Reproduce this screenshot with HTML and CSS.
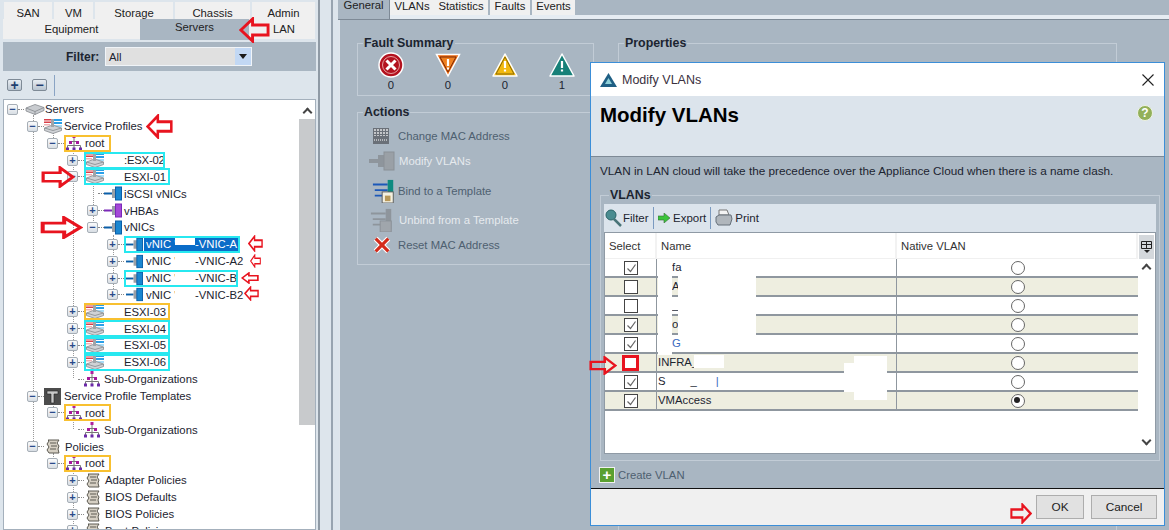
FILE: index.html
```html
<!DOCTYPE html>
<html lang="en">
<head>
<meta charset="utf-8">
<title>Modify VLANs</title>
<link rel="stylesheet" href="styles.css">
</head>
<body>
<svg class="defs" width="0" height="0">
  <symbol id="server" viewBox="0 0 20 13">
    <path d="M1 5l9-3.500 9 3v3l-9 4-9-3.500z" fill="#c9ccd0" stroke="#85898e" stroke-width=".8"/>
    <path d="M1 5l9 3.500 9-4M10 8.500v3.500" fill="none" stroke="#85898e" stroke-width=".8"/>
  </symbol>
  <symbol id="profile" viewBox="0 0 18 15">
    <rect x="0" y="0" width="7" height="1.500" fill="#d8404a"/><rect x="0" y="2.500" width="7" height="1.500" fill="#d8404a"/><rect x="0" y="5" width="6" height="1.500" fill="#eeb0b4"/>
    <rect x="10" y="0" width="8" height="2" fill="#2aa0e8"/><rect x="10" y="3" width="8" height="2" fill="#2aa0e8"/><rect x="10" y="6" width="8" height="2" fill="#a8dcf8"/>
    <path d="M.5 9l8-3 9 3v2.500l-8.500 3-8.500-3z" fill="#cfd2d6" stroke="#85898e" stroke-width=".8"/>
    <path d="M.5 9l8.500 2.500 8.500-2.500" fill="none" stroke="#85898e" stroke-width=".8"/>
    <rect x="7" y="0" width="3" height="8" fill="#a0a4a8"/>
  </symbol>
  <symbol id="org" viewBox="0 0 16 16">
    <path d="M8 2v11M4 8V6.500h8V8M1.500 13v-2.500h13V13" fill="none" stroke="#777" stroke-width="1"/>
    <rect x="6.500" y="0" width="3" height="3" fill="#b0209c"/><rect x="3" y="6" width="3" height="3" fill="#a6189c"/><rect x="10" y="6" width="3" height="3" fill="#a6189c"/>
    <rect x="0" y="12.500" width="3" height="3" fill="#6c2aa8"/><rect x="6.500" y="12.500" width="3" height="3" fill="#6c2aa8"/><rect x="13" y="12.500" width="3" height="3" fill="#6c2aa8"/>
  </symbol>
  <symbol id="vnic" viewBox="0 0 18 15">
    <rect x="0" y="6.500" width="8" height="2" fill="#0a5ea8"/>
    <rect x="8" y="3" width="4" height="9" fill="#9aa0a6"/>
    <rect x="11.500" y="1" width="6" height="13" fill="#1a86d0" stroke="#0a5ea8"/>
  </symbol>
  <symbol id="vhba" viewBox="0 0 18 15">
    <rect x="0" y="6.500" width="8" height="2" fill="#7a28b8"/>
    <rect x="8" y="3" width="4" height="9" fill="#9aa0a6"/>
    <rect x="11.500" y="1" width="6" height="13" fill="#a448d8" stroke="#7a28b8"/>
  </symbol>
  <symbol id="scroll" viewBox="0 0 15 15">
    <path d="M2 1h11l-2 3 2 3-1 3 1 4H3l-2-3 2-3-2-3 2-3z" fill="#d6d0c4" stroke="#5c5a52"/>
    <path d="M4 4h6M5 7h6M4 10h6" stroke="#5c5a52"/>
  </symbol>
  <symbol id="template" viewBox="0 0 17 17">
    <rect width="17" height="17" fill="#4c4c4c"/>
    <path d="M3 3h11v3h-4v9H7V6H3z" fill="#c8c8c8" stroke="#222" stroke-width=".6"/>
  </symbol>
  <symbol id="arrowL" viewBox="0 0 32 26" preserveAspectRatio="none">
    <path d="M2 13L14 2v6h16v10H14v6z" fill="none" stroke="#e8141f" stroke-width="3"/>
  </symbol>
  <symbol id="arrowR" viewBox="0 0 32 26" preserveAspectRatio="none">
    <path d="M30 13L18 2v6H2v10h16v6z" fill="none" stroke="#e8141f" stroke-width="3"/>
  </symbol>
  <symbol id="check" viewBox="0 0 13 13">
    <path d="M2.500 6.500l3 3 5-7" fill="none" stroke="#666" stroke-width="1.200"/>
  </symbol>
</svg>

<div class="screen">
  <aside class="nav">
    <div class="tabs-back">
      <span class="tb t-san">SAN</span><span class="tb t-vm">VM</span><span class="tb t-storage">Storage</span><span class="tb t-chassis">Chassis</span><span class="tb t-admin">Admin</span>
    </div>
    <div class="tabs-front">
      <span class="tf t-equip">Equipment</span><span class="tf t-servers">Servers</span><span class="tf t-lan"><span class="lan">LAN</span></span>
    </div>
    <div class="filter">
      <b class="filter-label">Filter:</b>
      <div class="select"><span class="select-val">All</span><span class="select-btn"><i class="caret"></i></span></div>
    </div>
    <div class="treetools">
      <span class="tool-btn">+</span><span class="tool-btn">&minus;</span><span class="tool-sep"></span>
    </div>
    <div class="tree">
      <div class="rows">
        <span class="vline v33"></span>
        <span class="vline v53a"></span><span class="vline v53b"></span><span class="vline v53c"></span>
        <span class="vline v73a"></span><span class="vline v73b"></span><span class="vline v73c"></span>
        <span class="vline v93"></span><span class="vline v113"></span>
        <div class="row l0"><span class="tg">&minus;</span><span class="dots"></span><svg class="ic ic20"><use href="#server"/></svg><span class="tx">Servers</span></div>
        <div class="row l1"><span class="tg">&minus;</span><span class="dots"></span><svg class="ic"><use href="#profile"/></svg><span class="tx">Service Profiles</span></div>
        <div class="row l2"><span class="tg">&minus;</span><span class="dots"></span><span class="lb box-y w-root"><svg class="ic ic-o"><use href="#org"/></svg><span class="tx">root</span></span></div>
        <div class="row l3"><span class="tg">+</span><span class="dots"></span><span class="lb box-c w-esx"><svg class="ic"><use href="#profile"/></svg><span class="tx gap-s tight">:ESX-02</span></span></div>
        <div class="row l3"><span class="tg">&minus;</span><span class="dots"></span><span class="lb box-c w-esxi"><svg class="ic"><use href="#profile"/></svg><span class="tx gap-s">ESXI-01</span></span></div>
        <div class="row l4"><span class="tg none"></span><span class="dots"></span><svg class="ic"><use href="#vnic"/></svg><span class="tx">iSCSI vNICs</span></div>
        <div class="row l4"><span class="tg">+</span><span class="dots"></span><svg class="ic"><use href="#vhba"/></svg><span class="tx">vHBAs</span></div>
        <div class="row l4"><span class="tg">&minus;</span><span class="dots"></span><svg class="ic"><use href="#vnic"/></svg><span class="tx">vNICs</span></div>
        <div class="row l5"><span class="tg">+</span><span class="dots"></span><span class="lb box-c w-va"><svg class="ic ic-v"><use href="#vnic"/></svg><span class="sel"><span class="vn">vNIC '</span><span class="mask half"></span><span>-VNIC-A</span></span></span></div>
        <div class="row l5"><span class="tg">+</span><span class="dots"></span><span class="lb"><svg class="ic ic-v"><use href="#vnic"/></svg><span class="vn vn-p">vNIC '</span><span class="mask"></span><span>-VNIC-A2</span></span></div>
        <div class="row l5"><span class="tg">+</span><span class="dots"></span><span class="lb box-c w-vb"><svg class="ic ic-v"><use href="#vnic"/></svg><span class="vn vn-p">vNIC '</span><span class="mask"></span><span>-VNIC-B</span></span></div>
        <div class="row l5"><span class="tg">+</span><span class="dots"></span><span class="lb"><svg class="ic ic-v"><use href="#vnic"/></svg><span class="vn vn-p">vNIC '</span><span class="mask"></span><span>-VNIC-B2</span></span></div>
        <div class="row l3"><span class="tg">+</span><span class="dots"></span><span class="lb box-y w-esxi"><svg class="ic"><use href="#profile"/></svg><span class="tx gap-s">ESXI-03</span></span></div>
        <div class="row l3"><span class="tg">+</span><span class="dots"></span><span class="lb box-c w-esxi"><svg class="ic"><use href="#profile"/></svg><span class="tx gap-s">ESXI-04</span></span></div>
        <div class="row l3"><span class="tg">+</span><span class="dots"></span><span class="lb box-c w-esxi"><svg class="ic"><use href="#profile"/></svg><span class="tx gap-s">ESXI-05</span></span></div>
        <div class="row l3"><span class="tg">+</span><span class="dots"></span><span class="lb box-c w-esxi"><svg class="ic"><use href="#profile"/></svg><span class="tx gap-s">ESXI-06</span></span></div>
        <div class="row l3"><span class="tg none"></span><span class="dots"></span><svg class="ic ic-o"><use href="#org"/></svg><span class="tx">Sub-Organizations</span></div>
        <div class="row l1"><span class="tg">&minus;</span><span class="dots"></span><svg class="ic ic-t"><use href="#template"/></svg><span class="tx">Service Profile Templates</span></div>
        <div class="row l2"><span class="tg">&minus;</span><span class="dots"></span><span class="lb box-y w-root"><svg class="ic ic-o"><use href="#org"/></svg><span class="tx">root</span></span></div>
        <div class="row l3"><span class="tg none"></span><span class="dots"></span><svg class="ic ic-o"><use href="#org"/></svg><span class="tx">Sub-Organizations</span></div>
        <div class="row l1"><span class="tg">&minus;</span><span class="dots"></span><svg class="ic ic-s"><use href="#scroll"/></svg><span class="tx">Policies</span></div>
        <div class="row l2"><span class="tg">&minus;</span><span class="dots"></span><span class="lb box-y w-root"><svg class="ic ic-o"><use href="#org"/></svg><span class="tx">root</span></span></div>
        <div class="row l3"><span class="tg">+</span><span class="dots"></span><svg class="ic ic-s"><use href="#scroll"/></svg><span class="tx">Adapter Policies</span></div>
        <div class="row l3"><span class="tg">+</span><span class="dots"></span><svg class="ic ic-s"><use href="#scroll"/></svg><span class="tx">BIOS Defaults</span></div>
        <div class="row l3"><span class="tg">+</span><span class="dots"></span><svg class="ic ic-s"><use href="#scroll"/></svg><span class="tx">BIOS Policies</span></div>
        <div class="row l3"><span class="tg">+</span><span class="dots"></span><svg class="ic ic-s"><use href="#scroll"/></svg><span class="tx">Boot Policies</span></div>
      </div>
      <div class="vscroll"><span class="chev up"></span><span class="thumb"></span></div>
    </div>
  </aside>

  <main class="work">
    <div class="tabs-main">
      <span class="mt active">General</span><span class="mt m-vlans">VLANs</span><span class="mt m-stats">Statistics</span><span class="mt m-faults">Faults</span><span class="mt m-events">Events</span>
    </div>
    <div class="panel">
      <div class="col-left">
        <fieldset class="group fault">
          <legend>Fault Summary</legend>
          <div class="faults">
            <div class="fitem"><svg width="26" height="26" viewBox="0 0 26 26"><circle cx="13" cy="13" r="12" fill="#b3121f" stroke="#fff" stroke-width="1.500"/><circle cx="13" cy="13" r="8.500" fill="#b3121f" stroke="#e7a0a0"/><path d="M8.500 8.500l9 9M17.500 8.500l-9 9" stroke="#fff" stroke-width="3"/></svg><span>0</span></div>
            <div class="fitem"><svg width="26" height="26" viewBox="0 0 26 26"><path d="M1.500 2.500h23L13 24z" fill="#ec6a10" stroke="#fff" stroke-width="1.500"/><path d="M5 5h16L13 20z" fill="#f08020" stroke="#7c2c08"/><path d="M13 7v7M13 15.500v2" stroke="#fff" stroke-width="2.200"/></svg><span>0</span></div>
            <div class="fitem"><svg width="26" height="26" viewBox="0 0 26 26"><path d="M13 2L25 24H1z" fill="#f2b90f" stroke="#fff" stroke-width="1.500" stroke-linejoin="round"/><path d="M13 5L22 22H4z" fill="#f2b90f" stroke="#8a6a08"/><path d="M13 9v7M13 17.500v2" stroke="#fff" stroke-width="2.200"/></svg><span>0</span></div>
            <div class="fitem"><svg width="26" height="26" viewBox="0 0 26 26"><path d="M13 2L25 24H1z" fill="#178078" stroke="#fff" stroke-width="1.500" stroke-linejoin="round"/><path d="M13 9v7M13 17.500v2" stroke="#fff" stroke-width="2.200"/></svg><span>1</span></div>
          </div>
        </fieldset>
        <fieldset class="group actions">
          <legend>Actions</legend>
          <div class="action act-mac"><svg class="aic" viewBox="0 0 20 18"><rect x="2" y="1" width="16" height="16" fill="#6a7078"/><path d="M4 2v7M7 2v7M10 2v7M13 2v7M16 2v7" stroke="#fff" stroke-width="1.200" stroke-dasharray="2 1"/><path d="M3 13h14" stroke="#fff" stroke-dasharray="1 1"/></svg><span>Change MAC Address</span></div>
          <div class="action off act-mod"><svg class="aic" viewBox="0 0 26 20"><rect x="0" y="8" width="9" height="4" fill="#8e959c"/><rect x="9" y="4" width="6" height="12" fill="#8e959c"/><rect x="15" y="1" width="10" height="18" fill="#9aa0a6" stroke="#8a9096"/></svg><span>Modify VLANs</span></div>
          <div class="action act-bind"><svg class="aic" viewBox="0 0 26 26"><path d="M1 6h16M3 12h14M3 18h12" stroke="#1c58b8" stroke-width="2"/><rect x="17" y="1" width="6" height="22" fill="#0e8a80"/><rect x="11" y="14" width="12" height="12" fill="#f4f0e0" stroke="#5a5a5a"/><rect x="14" y="18" width="6" height="6" fill="#b89858"/></svg><span>Bind to a Template</span></div>
          <div class="action off act-unbind"><svg class="aic" viewBox="0 0 26 26"><path d="M1 6h16M3 12h14M3 18h12" stroke="#8e959c" stroke-width="2"/><rect x="17" y="1" width="6" height="22" fill="#8e959c"/><rect x="11" y="14" width="12" height="12" fill="#a0a6ac" stroke="#8a9096"/></svg><span>Unbind from a Template</span></div>
          <div class="action act-reset"><svg class="aic" viewBox="0 0 20 20"><path d="M3 3l14 14M17 3L3 17" stroke="#fff" stroke-width="6"/><path d="M3 3l14 14M17 3L3 17" stroke="#d42a1a" stroke-width="3.500"/></svg><span>Reset MAC Address</span></div>
        </fieldset>
      </div>
      <fieldset class="group props"><legend>Properties</legend></fieldset>
    </div>
  </main>

  <section class="dialog">
    <header class="dlg-title">
      <svg class="dlg-logo" width="17" height="14" viewBox="0 0 17 14"><path d="M8.500 0L17 14H0z" fill="#1f5f84"/><path d="M8.500 5L12 11H5z" fill="#8fd0d8"/></svg>
      <span class="dlg-title-text">Modify VLANs</span>
      <svg class="dlg-close" width="12" height="12" viewBox="0 0 12 12"><path d="M.5.500l11 11M11.500.500l-11 11" stroke="#222" stroke-width="1.100"/></svg>
    </header>
    <div class="dlg-head">
      <h1>Modify VLANs</h1>
      <span class="help">?</span>
    </div>
    <div class="dlg-body">
      <p class="note">VLAN in LAN cloud will take the precedence over the Appliance Cloud when there is a name clash.</p>
      <fieldset class="group vlans">
        <legend>VLANs</legend>
        <div class="tbl-tools">
          <span class="tt tt-f"><svg width="18" height="18" viewBox="0 0 18 18"><circle cx="7" cy="6" r="5" fill="#4a8c90" stroke="#2a6468"/><path d="M10 10l7 7" stroke="#4a7478" stroke-width="2.500"/></svg>Filter</span>
          <span class="tt-sep"></span>
          <span class="tt tt-e"><svg width="12" height="10" viewBox="0 0 12 10"><path d="M0 3h6V0l6 5-6 5V7H0z" fill="#3ac43a" stroke="#3a6a3a" stroke-width=".6"/></svg>Export</span>
          <span class="tt-sep"></span>
          <span class="tt"><svg width="18" height="18" viewBox="0 0 18 18"><path d="M4 1h8l2 5H4z" fill="#f4f4f4" stroke="#777"/><path d="M1 8l3-2h12l1 4-2 6H3l-2-3z" fill="#b0b6bc" stroke="#66707a"/></svg>Print</span>
        </div>
        <div class="tbl">
          <div class="tbl-main">
            <div class="thead"><span class="c1">Select</span><span class="c2">Name</span><span class="c3">Native VLAN</span></div>
            <div class="tr"><span class="c1"><i class="cb"><svg width="13" height="13"><use href="#check"/></svg></i></span><span class="c2 ind">fa</span><span class="c3"><i class="rb"></i></span></div>
            <div class="tr alt"><span class="c1"><i class="cb"></i></span><span class="c2 ind">A</span><span class="c3"><i class="rb"></i></span></div>
            <div class="tr"><span class="c1"><i class="cb"></i></span><span class="c2 ind">_</span><span class="c3"><i class="rb"></i></span></div>
            <div class="tr alt"><span class="c1"><i class="cb"><svg width="13" height="13"><use href="#check"/></svg></i></span><span class="c2 ind">o</span><span class="c3"><i class="rb"></i></span></div>
            <div class="tr"><span class="c1"><i class="cb"><svg width="13" height="13"><use href="#check"/></svg></i></span><span class="c2 ind link">G</span><span class="c3"><i class="rb"></i></span></div>
            <div class="tr alt"><span class="c1"><i class="cb"></i></span><span class="c2">INFRA_</span><span class="c3"><i class="rb"></i></span></div>
            <div class="tr"><span class="c1"><i class="cb"><svg width="13" height="13"><use href="#check"/></svg></i></span><span class="c2">S<span class="frag">_</span><span class="frag2 link">|</span></span><span class="c3"><i class="rb"></i></span></div>
            <div class="tr alt"><span class="c1"><i class="cb"><svg width="13" height="13"><use href="#check"/></svg></i></span><span class="c2">VMAccess</span><span class="c3"><i class="rb on"></i></span></div>
          </div>
          <div class="tbl-side">
            <span class="col-btn"><svg width="11" height="13" viewBox="0 0 11 13"><path d="M.5.500h10v7H.5zM.5 3.500h10M5.500.500v7" fill="none" stroke="#222"/><path d="M3 9h6l-3 3z" fill="#222"/></svg></span>
            <span class="chev up"></span>
            <span class="chev down"></span>
          </div>
          <span class="patch p1"></span><span class="patch p2"></span><span class="patch p3"></span><span class="patch p4"></span><span class="patch p5"></span>
          <span class="redbox"></span>
        </div>
      </fieldset>
      <div class="create"><span class="plus">+</span><span>Create VLAN</span></div>
    </div>
    <footer class="dlg-foot">
      <button class="btn ok">OK</button>
      <button class="btn cancel">Cancel</button>
    </footer>
  </section>

  <svg class="arrow a1"><use href="#arrowL"/></svg>
  <svg class="arrow a2"><use href="#arrowL"/></svg>
  <svg class="arrow a3"><use href="#arrowR"/></svg>
  <svg class="arrow a4"><use href="#arrowR"/></svg>
  <svg class="arrow a5"><use href="#arrowL"/></svg>
  <svg class="arrow a6"><use href="#arrowL"/></svg>
  <svg class="arrow a7"><use href="#arrowL"/></svg>
  <svg class="arrow a8"><use href="#arrowL"/></svg>
  <svg class="arrow a9"><use href="#arrowR"/></svg>
  <svg class="arrow a10"><use href="#arrowR"/></svg>
</div>
</body>
</html>
```
FILE: styles.css
```css
* { box-sizing: border-box; }
html, body { margin: 0; height: 100%; }
body { overflow: hidden; background: #dde5ec; font: 11.3px "Liberation Sans", Arial, sans-serif; color: #1c2430; }
.defs { position: absolute; }
.screen { position: relative; display: flex; width: 1169px; height: 530px; overflow: hidden; }

/* left navigator */
.nav { width: 320px; flex: none; display: flex; flex-direction: column; padding-left: 3px; background: #dde5ec; border-right: 2px solid #8f9aa5; height: 530px; }
.tabs-back { display: flex; height: 17px; margin-top: 2px; flex: none; gap: 2px; padding-left: 1px; overflow: hidden; margin-bottom: 0; }
.tb { display: block; background: #f0f0f0; text-align: center; height: 17px; padding-top: 3px; line-height: 16px; color: #222; overflow: hidden; }
.t-san { width: 48px; } .t-vm { width: 39px; } .t-storage { width: 78px; } .t-chassis { width: 75px; } .t-admin { width: 63px; }
.tabs-front { display: flex; height: 20px; width: 312px; flex: none; }
.tf { display: block; text-align: center; background: #f0f0f0; line-height: 20px; color: #222; }
.t-equip { width: 137px; }
.t-servers { width: 109px; background: #a9b6c2; line-height: 16px; height: 21px; }
.t-lan { width: 66px; }
.lan { margin-left: 4px; }
.filter { margin-top: 3px; height: 29px; width: 313px; background: #a9b6c2; display: flex; align-items: center; padding-left: 63px; gap: 5px; flex: none; }
.filter-label { font-size: 12px; color: #1c2430; width: 34px; }
.select { width: 147px; height: 19px; background: #e0e0e0; border: 1px solid #f0f4f8; display: flex; align-items: center; padding-left: 3px; }
.select-val { flex: 1; }
.select-btn { width: 16px; height: 17px; background: #c2d8f4; display: flex; align-items: center; justify-content: center; }
.caret { width: 0; height: 0; border: 4px solid transparent; border-top: 5px solid #1a1a1a; border-bottom: 0; }
.treetools { height: 28px; flex: none; display: flex; align-items: center; padding-left: 4px; gap: 10px; width: 313px; }
.tool-btn { width: 15px; height: 12px; background: linear-gradient(#e8edf2, #b8c4d0); border: 1px solid #7e8a96; border-radius: 2px; display: flex; align-items: center; justify-content: center; font-weight: bold; color: #1f3f70; font-size: 14px; line-height: 1; }
.tool-sep { width: 1px; height: 21px; background: #8aa4c4; margin-left: -3px; }
.tree { flex: 1; width: 313px; background: #fff; border: 1px solid #a4b0bc; position: relative; display: flex; min-height: 0; overflow: hidden; }
.rows { flex: 1; position: relative; padding-top: 1px; }
.row { height: 16.870px; display: flex; align-items: center; white-space: nowrap; color: #1c2430; position: relative; }
.l0 { padding-left: 3px; } .l1 { padding-left: 23px; } .l2 { padding-left: 43px; } .l3 { padding-left: 63px; } .l4 { padding-left: 83px; } .l5 { padding-left: 103px; }
.tg { width: 11px; height: 11px; flex: none; border: 1px solid #a6aeb6; border-radius: 2px; background: linear-gradient(#fafbfc, #d8dee4); display: flex; align-items: center; justify-content: center; font-size: 11px; line-height: 1; color: #2a4a8a; font-weight: bold; position: relative; z-index: 1; }
.tg.none { visibility: hidden; width: 5.500px; margin-left: 5.500px; }
.tg.none + .dots { width: 6px; }
.dots { width: 6px; flex: none; border-top: 1px dotted #888; }
.ic { width: 18px; height: 15px; flex: none; margin-right: 2px; }
.ic20 { width: 20px; height: 13px; margin-left: 1px; margin-right: 0; }
.ic-o { width: 16px; height: 16px; margin-right: 3px; }
.row > .ic-o { margin-right: 4px; }
.ic-t { width: 17px; height: 17px; margin-right: 3px; }
.ic-s { width: 15px; height: 15px; margin-left: 2px; margin-right: 4px; }
.ic-v { width: 17px; margin-right: 1px; }
.lb { display: flex; align-items: center; height: 17px; padding-left: 2px; flex: none; }
.box-c { outline: 2px solid #27e8f0; outline-offset: -2px; }
.box-y { outline: 2px solid #f8c030; outline-offset: -2px; }
.w-root { width: 47px; } .w-esx { width: 81px; } .w-esxi { width: 86px; } .w-va { width: 116px; } .w-vb { width: 114px; }
.gap-s { margin-left: 18px; }
.tight { letter-spacing: -.2px; }
.mask { width: 20px; flex: none; height: 15px; background: #fff; }
.mask.half { background: linear-gradient(#fff 50%, transparent 50%); }
.vn { width: 29px; flex: none; overflow: hidden; }
.vn-p { margin-left: 2px; }
.sel { display: flex; align-items: center; height: 15px; color: #fff; background: #0a6cc8; padding-left: 2px; width: 95px; flex: none; }
.vline { position: absolute; width: 0; border-left: 1px dotted #999; }
.v33 { left: 28.500px; top: 15px; height: 330px; }
.v53a { left: 48.500px; top: 32px; height: 10px; }
.v53b { left: 48.500px; top: 303px; height: 10px; }
.v53c { left: 48.500px; top: 353px; height: 10px; }
.v73a { left: 68.500px; top: 50px; height: 228px; }
.v73b { left: 68.500px; top: 320px; height: 9px; }
.v73c { left: 68.500px; top: 370px; height: 60px; }
.v93 { left: 88.500px; top: 83px; height: 44px; }
.v113 { left: 108.500px; top: 135px; height: 60px; }
.vscroll { width: 16px; background: #fff; flex: none; position: relative; }
.thumb { position: absolute; left: 0; right: 0; top: 19px; height: 306px; background: #c8cacc; }
.chev { display: block; width: 7px; height: 7px; border-left: 2px solid #444; border-top: 2px solid #444; transform: rotate(45deg); position: absolute; }
.vscroll .up { left: 5px; top: 9px; }

/* main */
.work { flex: 1; display: flex; flex-direction: column; padding-left: 18px; background: linear-gradient(90deg, #dde5ec 11px, #98a4b0 11px, #98a4b0 13px, #dde5ec 13px); min-width: 0; }
.tabs-main { display: flex; height: 20px; flex: none; background: linear-gradient(#a9b6c2 15px, #e6ecf2 15px, #e6ecf2 19px, #7e8a96 19px); }
.mt { background: #f0f0f0; height: 15px; line-height: 13px; color: #222; text-align: center; }
.mt.active { background: #a9b6c2; height: 19px; width: 52px; line-height: 11px; border-right: 1px solid #7e8a96; }
.m-vlans { width: 44px; } .m-stats { width: 54px; margin-right: 2px; } .m-faults { width: 40px; margin-right: 2px; } .m-events { width: 43px; }
.panel { flex: 1; background: #a9b6c2; margin-left: 1px; border-left: 1px solid #e0e6ec; display: flex; padding: 17px 0 0 17px; gap: 24px; overflow: hidden; min-height: 0; }
.col-left { width: 237px; display: flex; flex-direction: column; gap: 10px; flex: none; }
.group { margin: 0; padding: 0; border: 1px solid #c2ccd6; min-width: 0; }
.group legend { margin-left: 5px; padding: 0 1px; font-weight: bold; font-size: 12.400px; color: #1c2430; line-height: 13px; }
.fault { height: 59px; flex: none; }
.faults { display: flex; padding-left: 20px; gap: 31px; margin-top: 2px; }
.fitem { width: 26px; display: flex; flex-direction: column; align-items: center; line-height: 14px; }
.actions { height: 159px; padding-left: 13px; flex: none; }
.actions legend { margin-left: -8px; }
.action { display: flex; align-items: center; color: #4e6070; }
.off { color: #e6eaee; }
.aic { width: 20px; height: 20px; flex: none; }
.act-mac { margin-top: 3px; height: 27px; }
.act-mac .aic { height: 18px; }
.act-mac span { margin-left: 7px; }
.act-mod { margin-left: -2px; height: 23px; }
.act-mod .aic { width: 26px; height: 20px; }
.act-mod span { margin-left: 4px; }
.act-bind { margin-left: 1px; height: 38px; }
.act-bind .aic { width: 24px; height: 24px; }
.act-bind span { margin-left: 2px; }
.act-unbind { margin-left: -1px; height: 20px; }
.act-unbind .aic { width: 24px; height: 24px; }
.act-unbind span { margin-left: 5px; }
.act-reset { height: 30px; margin-left: 2px; }
.act-reset .aic { width: 18px; height: 18px; }
.act-reset span { margin-left: 7px; }
.props { width: 499px; flex: none; height: 520px; }

/* dialog */
.dialog { position: absolute; left: 590px; top: 62px; width: 575px; height: 464px; background: #a9b6c2; border: 1px solid #3b8ed8; display: flex; flex-direction: column; }
.dlg-title { height: 33px; flex: none; background: #fff; display: flex; align-items: center; padding-left: 9px; }
.dlg-logo { margin-right: 5px; }
.dlg-title-text { color: #3a3040; flex: 1; font-size: 12.500px; }
.dlg-close { margin-right: 10px; }
.dlg-head { height: 61px; flex: none; background: #dce4ec; border-bottom: 1px solid #7e8a96; display: flex; justify-content: space-between; padding: 7px 11px 0 9px; }
.dlg-head h1 { margin: 0; font: bold 20.500px/24px "Liberation Sans", Arial, sans-serif; color: #000; }
.help { width: 16px; height: 16px; border-radius: 50%; background: #92b05a; border: 1px solid #eef2e4; color: #fff; font-weight: bold; font-size: 12px; line-height: 14px; text-align: center; margin-top: 2px; }
.dlg-body { flex: 1; min-height: 0; padding: 0 4px 0 9px; display: flex; flex-direction: column; }
.note { margin: 7px 0 11px; line-height: 14px; color: #1c2430; height: 14px; white-space: nowrap; font-size: 11.750px; }
.vlans { height: 272px; padding: 0 3px 3px 3px; flex: none; }
.tbl-tools { height: 28px; background: #dce4ec; display: flex; align-items: center; gap: 4px; margin-top: 2px; }
.tt { display: flex; align-items: center; gap: 2px; color: #1c2430; font-size: 11.500px; }
.tt-f { gap: 1px; width: 45px; }
.tt-e { gap: 3px; }
.tt-sep { width: 1px; height: 22px; background: #7a9ac0; }
.tbl { height: 222px; background: #fff; border: 1px solid #8f9aa5; display: flex; position: relative; overflow: hidden; }
.tbl-main { width: 533px; flex: none; display: flex; flex-direction: column; }
.thead { height: 26px; display: grid; grid-template-columns: 52px 240px 241px; flex: none; align-items: center; border-bottom: 1px solid #f0f0f0; }
.thead .c1, .thead .c2, .thead .c3 { padding-left: 4px; border-right: 2px solid #f2f2f2; height: 26px; line-height: 26px; color: #333; }
.tr { height: 19px; display: grid; grid-template-columns: 52px 240px 241px; align-items: center; border-bottom: 2px solid #8f979f; flex: none; }
.tr.alt { background: #eeeee0; }
.tr .c1 { display: flex; justify-content: center; height: 17px; align-items: center; border-right: 1px solid #8f979f; }
.tr .c2 { padding-left: 1px; height: 17px; line-height: 17px; border-right: 1px solid #8f979f; overflow: hidden; white-space: nowrap; }
.tr .c3 { display: flex; justify-content: center; align-items: center; }
.ind { padding-left: 15px !important; }
.link { color: #3a6ac0; }
.frag { margin-left: 25px; }
.frag2 { margin-left: 19px; }
.cb { width: 14px; height: 14px; border: 1px solid #444; background: #fff; display: block; }
.cb svg { display: block; }
.rb { width: 14px; height: 14px; border-radius: 50%; border: 1.500px solid #666; background: #fff; display: block; position: relative; }
.rb.on::after { content: ""; position: absolute; left: 2.500px; top: 2.500px; width: 6px; height: 6px; border-radius: 50%; background: #222; }
.tbl-side { flex: 1; position: relative; background: #fff; }
.col-btn { position: absolute; left: 1px; top: 2px; width: 15px; height: 24px; background: #d4d8dc; display: flex; align-items: center; justify-content: center; }
.tbl-side .up { left: 5px; top: 32px; }
.tbl-side .down { left: 5px; top: 204px; transform: rotate(225deg); }
.patch { position: absolute; background: #fff; }
.p1 { left: 53px; top: 26px; width: 14px; height: 96px; }
.p2 { left: 73px; top: 43px; width: 78px; height: 59px; }
.p3 { left: 89px; top: 122px; width: 30px; height: 13px; }
.p4 { left: 239px; top: 130px; width: 43px; height: 29px; }
.p5 { left: 249px; top: 123px; width: 33px; height: 44px; }
.redbox { position: absolute; left: 17px; top: 122px; width: 17px; height: 16px; border: 3px solid #e8141f; }
.create { display: flex; align-items: center; gap: 3px; height: 29px; color: #4e6070; margin-left: -1px; }
.plus { width: 16px; height: 16px; background: #5aa030; border: 1px solid #f0f0f0; color: #fff; font-weight: bold; font-size: 15px; line-height: 13px; text-align: center; }
.dlg-foot { height: 37px; flex: none; background: #f0f0f0; border-top: 1px solid #111; display: flex; justify-content: flex-end; padding: 6px 7px 0 0; gap: 7px; }
.btn { font: 11.800px "Liberation Sans", Arial, sans-serif; background: #e1e1e1; border: 1px solid #adadad; color: #222; height: 24px; padding: 0; }
.ok { width: 48px; } .cancel { width: 66px; }

/* callout arrows */
.arrow { position: absolute; z-index: 5; }
.a1 { left: 239px; top: 17px; width: 31px; height: 26px; }
.a2 { left: 146px; top: 114px; width: 27px; height: 25px; }
.a3 { left: 41px; top: 166px; width: 34px; height: 22px; }
.a4 { left: 40px; top: 216px; width: 43px; height: 23px; }
.a5 { left: 248px; top: 235px; width: 15px; height: 17px; }
.a6 { left: 250px; top: 254px; width: 11px; height: 14px; }
.a7 { left: 241px; top: 272px; width: 18px; height: 12px; }
.a8 { left: 244px; top: 286px; width: 15px; height: 15px; }
.a9 { left: 589px; top: 356px; width: 28px; height: 19px; }
.a10 { left: 1010px; top: 503px; width: 22px; height: 21px; }
```
